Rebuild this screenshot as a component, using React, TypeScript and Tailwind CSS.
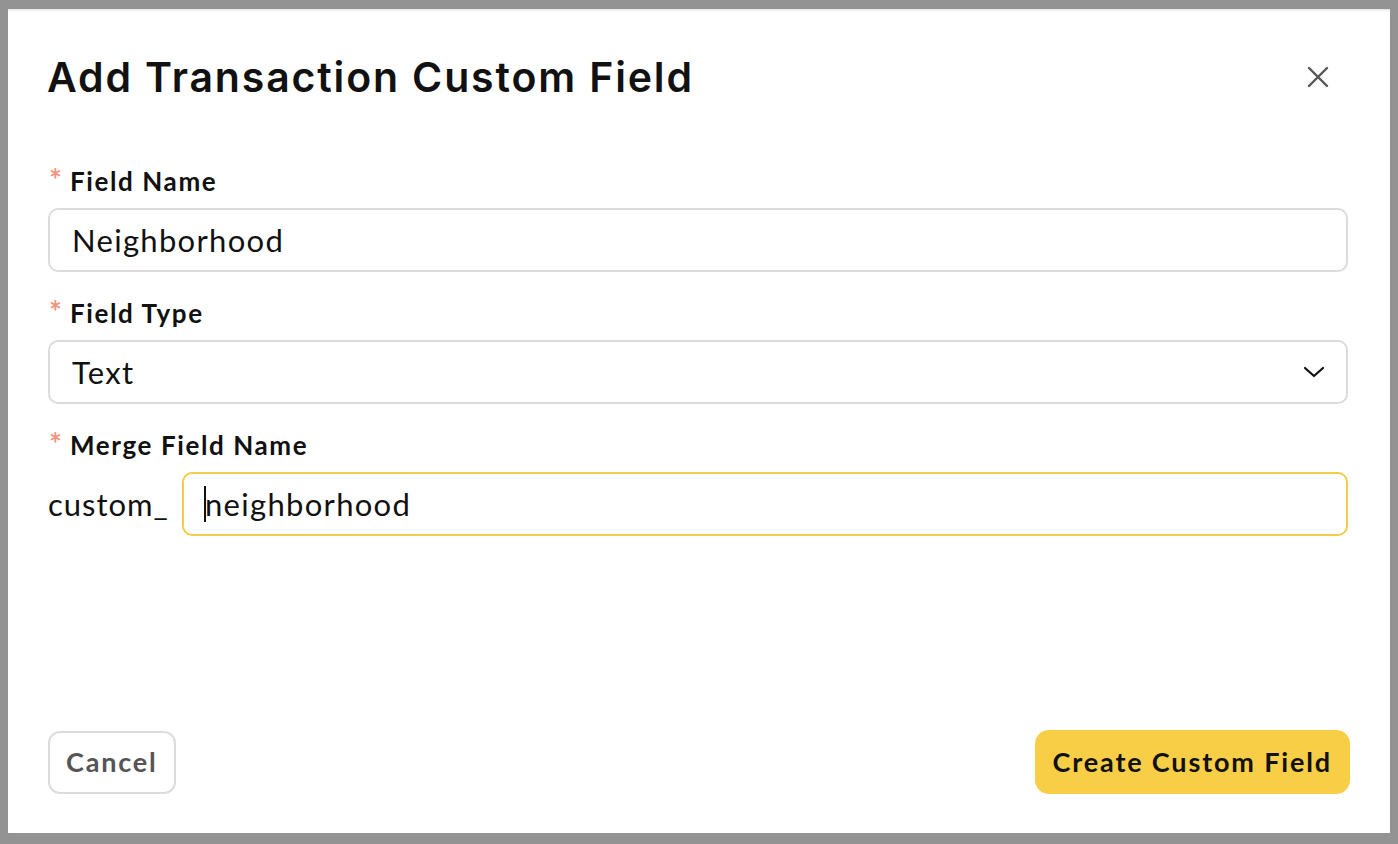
import React from "react";

function Label({ text }: { text: string }) {
  return (
    <div className="flex items-start h-[30px]">
      <span className="text-[#ef9580] text-[30px] leading-[26px] w-[22px] pl-[1px] font-bold">*</span>
      <span className="text-[26px] leading-[30px] font-bold text-[#111] tracking-[1.6px]">{text}</span>
    </div>
  );
}

export default function App() {
  return (
    <div className="w-full h-[844px] bg-[#939393] pt-[9px] pl-[8px] pr-[8px] pb-[11px] [font-family:Lato,'Noto_Sans',sans-serif]">
      <div className="bg-white h-full flex flex-col pl-[40px] pr-[42px] shadow-[inset_0_3px_3px_-2px_rgba(0,0,0,0.15)]">
        <div className="flex items-center justify-between pt-[46px]">
          <h1 className="text-[41px] leading-[44px] font-semibold text-[#111] tracking-[1.85px] [font-family:Inter,sans-serif] ml-[-1px]">
            Add Transaction Custom Field
          </h1>
          <svg width="22" height="22" viewBox="0 0 22 22" className="mr-[19px]">
            <path d="M2 2 L20 20 M20 2 L2 20" stroke="#555" strokeWidth="2.4" strokeLinecap="round" />
          </svg>
        </div>

        <div className="mt-[67px] flex flex-col">
          <Label text="Field Name" />
          <div className="mt-[12px] h-[64px] border-2 border-[#dcdcdc] rounded-[10px] flex items-center pl-[22px] text-[31px] tracking-[1.3px] text-[#111]">
            Neighborhood
          </div>

          <div className="mt-[26px]">
            <Label text="Field Type" />
          </div>
          <div className="mt-[12px] h-[64px] border-2 border-[#dcdcdc] rounded-[10px] flex items-center justify-between pl-[22px] pr-[21px] text-[31px] tracking-[1.3px] text-[#111]">
            <span>Text</span>
            <svg width="22" height="12" viewBox="0 0 22 12">
              <path d="M2 2 L11 10 L20 2" stroke="#111" strokeWidth="2.2" fill="none" strokeLinecap="round" strokeLinejoin="round" />
            </svg>
          </div>

          <div className="mt-[26px]">
            <Label text="Merge Field Name" />
          </div>
          <div className="mt-[12px] flex items-center">
            <span className="text-[31px] tracking-[1px] text-[#111] w-[134px] shrink-0">custom_</span>
            <div className="flex-1 h-[64px] border-2 border-[#f5cb47] rounded-[10px] flex items-center pl-[20px] text-[31px] tracking-[1.3px] text-[#111]">
              <span className="w-[2px] h-[36px] bg-[#111] mr-[-1px]"></span>
              <span>neighborhood</span>
            </div>
          </div>
        </div>

        <div className="mt-auto pb-[39px] flex items-center justify-between">
          <button className="h-[63px] px-[16px] border-2 border-[#dcdcdc] rounded-[12px] text-[27px] font-bold text-[#555] tracking-[1.8px] bg-white">
            Cancel
          </button>
          <button className="h-[64px] px-[18px] mr-[-2px] rounded-[14px] bg-[#f7ce46] text-[27px] font-bold text-[#111] tracking-[1.85px]">
            Create Custom Field
          </button>
        </div>
      </div>
    </div>
  );
}
